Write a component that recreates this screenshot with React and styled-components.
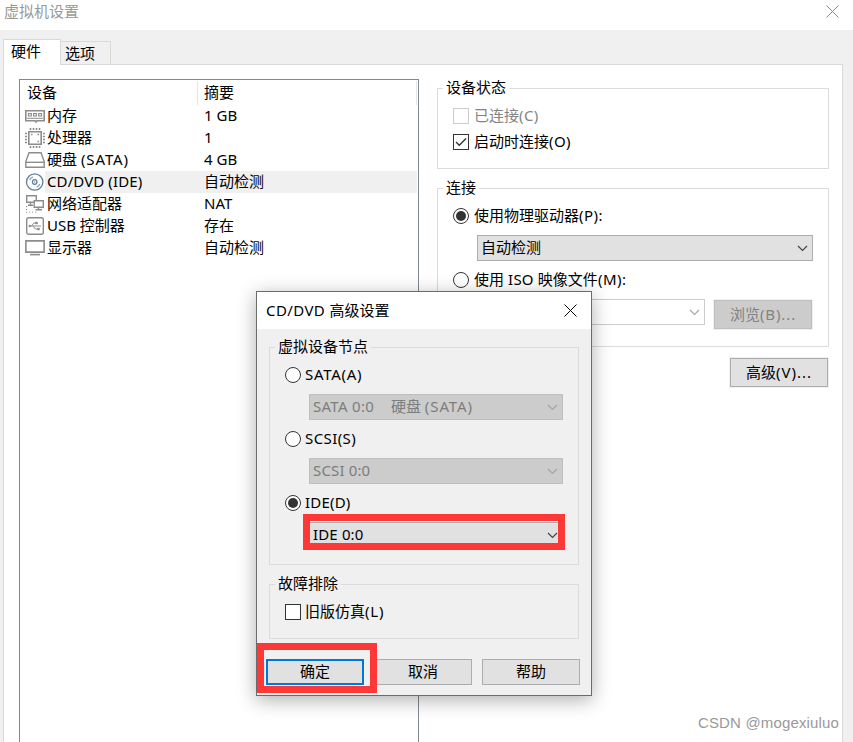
import React from 'react';
import { useState } from 'react';
import styled, { createGlobalStyle } from 'styled-components';

const GlobalStyle = createGlobalStyle`
    * {
        box-sizing: border-box;
    }
    body {
        margin: 0;
        overflow: hidden;
        font-family: "Noto Sans", "Noto Sans CJK SC", sans-serif;
        font-size: 15px;
        color: #000;
    }
`;

const Window = styled.div`
    position: relative;
    display: flex;
    flex-direction: column;
    width: 853px;
    height: 742px;
    overflow: hidden;
    background-color: #f0f0f0;
`;

const Latin = styled.span`
    letter-spacing: ${(props) => props.$spacing}px;
`;

const TitleBar = styled.div`
    display: flex;
    justify-content: space-between;
    height: 30px;
    padding: 0 14px 0 4px;
    line-height: 23px;
    color: #999;
    background-color: white;
`;

const CloseIcon = styled.svg`
    width: 13px;
    height: 13px;
    margin-top: ${(props) => props.$top}px;
    fill: none;
    stroke: ${(props) => props.$color};
    stroke-width: 1;
`;

const TabBar = styled.div`
    display: flex;
    align-items: flex-end;
    height: 34px;
    padding-left: 3px;
`;

const Tab = styled.div`
    position: relative;
    width: ${(props) => (props.$active ? 58 : 50)}px;
    height: ${(props) => (props.$active ? 26 : 23)}px;
    margin-bottom: ${(props) => (props.$active ? -1 : 0)}px;
    padding-left: ${(props) => (props.$active ? 7 : 4)}px;
    border: 1px solid #d9d9d9;
    border-bottom: none;
    border-left-width: ${(props) => (props.$active ? 1 : 0)}px;
    line-height: ${(props) => (props.$active ? 22 : 23)}px;
    background-color: ${(props) => (props.$active ? 'white' : '#f0f0f0')};
`;

const Panel = styled.div`
    display: flex;
    flex: 1;
    gap: 18px;
    margin: 0 10px 0 3px;
    padding: 14px 0 0 15px;
    border: 1px solid #d9d9d9;
    border-bottom: none;
    background-color: white;
`;

const DeviceList = styled.div`
    width: 400px;
    border: 1px solid #828790;
    border-bottom: none;
    padding-right: 1px;
`;

const ListHeader = styled.div`
    display: flex;
    height: 25px;
    padding-top: 1px;
    line-height: 22px;
`;

const HeaderCell = styled.div`
    width: ${(props) => props.$width}px;
    padding-left: ${(props) => props.$indent}px;
    border-right: 1px solid #e5e5e5;
`;

const DeviceRow = styled.div`
    display: flex;
    height: 22px;
    padding-left: 5px;
    line-height: 20px;
`;

const DeviceIcon = styled.svg`
    flex: none;
    width: 20px;
    height: 22px;
    fill: none;
    stroke: #8c8c8c;
    stroke-width: 1.6;
`;

const DeviceCells = styled.div`
    display: flex;
    flex: 1;
    padding-left: 2px;
    background-color: ${(props) => (props.$selected ? '#f0f0f0' : 'transparent')};
`;

const DeviceName = styled.span`
    width: 157px;
    white-space: nowrap;
`;

const Details = styled.div`
    display: flex;
    flex-direction: column;
    width: 392px;
    padding-top: 9px;
`;

const Group = styled.div`
    display: flex;
    flex-direction: column;
    align-items: flex-start;
    height: ${(props) => props.$height}px;
    margin-bottom: ${(props) => props.$gap}px;
    border: 1px solid #dcdcdc;
`;

const GroupTitle = styled.div`
    height: 20px;
    margin: -11px 0 0 5px;
    padding: 0 3px;
    line-height: 18px;
    background-color: ${(props) => props.$bg || 'white'};
`;

const Option = styled.div`
    display: flex;
    align-items: center;
    height: 16px;
    margin: ${(props) => props.$top || 10}px 0 0 15px;
    line-height: 16px;
    white-space: nowrap;
    color: ${(props) => (props.$disabled ? '#838383' : '#000')};
    cursor: default;
`;

const OptionText = styled.span`
    margin: -1px 0 1px ${(props) => props.$gap || 5}px;
`;

const CheckBox = styled.span`
    display: flex;
    width: 16px;
    height: 16px;
    border: 1px solid ${(props) => (props.$disabled ? '#ccc' : '#333')};
    background-color: white;
`;

const RadioCircle = styled.span`
    display: flex;
    align-items: center;
    justify-content: center;
    width: 16px;
    height: 16px;
    border: 1px solid #333;
    border-radius: 50%;
    background-color: white;

    &::after {
        content: '';
        width: 10px;
        height: 10px;
        border-radius: 50%;
        background-color: ${(props) => (props.$checked ? '#333' : 'transparent')};
    }
`;

const SelectBox = styled.div`
    display: flex;
    align-items: center;
    width: ${(props) => props.$width}px;
    height: 26px;
    margin: 11px 0 0 39px;
    padding: 0 4px 0 3px;
    border: 1px solid ${(props) => (props.$disabled ? '#bfbfbf' : '#adadad')};
    color: ${(props) => (props.$disabled ? '#7d7d7d' : '#000')};
    background-color: ${(props) => (props.$disabled ? '#ccc' : '#e1e1e1')};
    white-space: pre;
`;

const SelectText = styled.span`
    margin: -1px 0 1px 0;
    line-height: 20px;
`;

const EmptySelect = styled(SelectBox)`
    margin: 0;
    border-color: #ccc;
    background-color: white;
`;

const Arrow = styled.svg`
    width: 11px;
    height: 7px;
    margin-left: auto;
    fill: none;
    stroke: ${(props) => (props.$disabled ? '#a6a6a6' : '#444')};
    stroke-width: 1.2;
`;

const FileRow = styled.div`
    display: flex;
    gap: 9px;
    margin: 11px 0 0 39px;
`;

const Button = styled.button`
    width: 98px;
    height: ${(props) => props.$height || 26}px;
    padding: 0 0 2px 0;
    border: ${(props) => (props.$primary ? '2px solid #0078d7' : '1px solid #adadad')};
    font: inherit;
    line-height: 20px;
    color: black;
    background-color: #e1e1e1;

    &:disabled {
        border-color: #bfbfbf;
        color: #838383;
        background-color: #ccc;
    }
`;

const BrowseButton = styled(Button)`
    margin-top: 1px;
    box-shadow: 0 0 0 1px #f0f0f0;
`;

const AdvancedButton = styled(Button)`
    align-self: flex-end;
    margin-right: 1px;
    box-shadow: 0 0 0 1px #f0f0f0;
`;

const Dialog = styled.div`
    position: absolute;
    left: 256px;
    top: 291px;
    width: 336px;
    height: 405px;
    border: 1px solid #6b6b6b;
    background-color: #f0f0f0;
    box-shadow: 0 4px 18px rgba(0, 0, 0, 0.32);
`;

const DialogTitle = styled.div`
    display: flex;
    justify-content: space-between;
    height: 37px;
    padding: 0 14px 0 9px;
    line-height: 36px;
    background-color: white;
`;

const DialogBody = styled.div`
    padding: 18px 12px 0 12px;
`;

const DialogButtons = styled.div`
    display: flex;
    gap: 10px;
    margin: 20px -3px 0 -3px;
`;

const Highlight = styled.div`
    position: absolute;
    left: ${(props) => props.$left}px;
    top: ${(props) => props.$top}px;
    width: ${(props) => props.$width}px;
    height: ${(props) => props.$height}px;
    border: 7px solid #fd3836;
    pointer-events: none;
`;

const Watermark = styled.div`
    position: absolute;
    right: 14px;
    bottom: 9px;
    font-family: "Liberation Sans", sans-serif;
    font-size: 15px;
    letter-spacing: 0.15px;
    line-height: 20px;
    color: #999;
`;

const icons = {
    memory: (
        <>
            <path d="M0.8 5.8H19.2V15.8H12L11 17L10 15.8H0.8Z" />
            <path d="M3.5 8.5H6.3V11H3.5ZM8.6 8.5H11.4V11H8.6ZM13.7 8.5H16.5V11H13.7Z" strokeWidth="1.2" />
            <path d="M2 13.3H18" strokeWidth="1" />
        </>
    ),
    cpu: (
        <>
            <path d="M3.8 4.8H16.2V17.2H3.8Z" />
            <path d="M5.5 1V3M8.5 1V3M11.5 1V3M14.5 1V3M5.5 19V21M8.5 19V21M11.5 19V21M14.5 19V21" />
            <path d="M0 6.5H2M0 9.5H2M0 12.5H2M0 15.5H2M18 6.5H20M18 9.5H20M18 12.5H20M18 15.5H20" />
            <path d="M6 7.5H7.5M12.5 7.5H14M12.5 14.5H14" strokeWidth="1.5" />
        </>
    ),
    disk: (
        <>
            <path d="M4 3.7H16L19.2 12.5V18.3H0.8V12.5Z" strokeWidth="1.4" />
            <path d="M1 13.3H19" strokeWidth="1.4" />
        </>
    ),
    cd: (
        <>
            <circle cx="9.7" cy="11" r="8.2" stroke="#5f7f9c" strokeWidth="1.3" />
            <circle cx="9.7" cy="11" r="2.3" stroke="#5f7f9c" strokeWidth="1.2" />
            <circle cx="9.7" cy="11" r="0.7" fill="#5f7f9c" stroke="none" />
            <path d="M4.6 9A5.6 5.6 0 0 1 7.8 5.8M14.8 13A5.6 5.6 0 0 1 11.6 16.2" stroke="#7fa3c4" strokeWidth="1.3" />
        </>
    ),
    network: (
        <>
            <path d="M1.7 2.7H11.3V9.3H1.7ZM5.5 9.5V12M3 12.2H8" strokeWidth="1.4" />
            <path d="M9.2 7.7H18.3V14.3H9.2Z" fill="white" strokeWidth="1.4" />
            <path d="M13.5 14.5V16.5M10.5 16.7H17" strokeWidth="1.4" />
            <path d="M1.5 13V19.3H13" strokeDasharray="1 2" strokeWidth="1.1" />
        </>
    ),
    usb: (
        <>
            <rect x="1.7" y="2.7" width="16.6" height="16.6" rx="2" strokeWidth="1.4" />
            <path d="M4.5 11H16M6.5 11L9 8H11M8 11L10.5 14H13" strokeWidth="1" />
            <path d="M10.5 7H12.5V9H10.5ZM12.5 13H14.5V15H12.5Z" fill="#8c8c8c" strokeWidth="0.4" />
            <circle cx="4.8" cy="11" r="1.2" fill="#8c8c8c" stroke="none" />
        </>
    ),
    display: (
        <>
            <path d="M0.9 3.9H19.1V15.1H0.9Z" />
            <path d="M5 17.6H15" />
        </>
    ),
};

const devices = [
    { icon: 'memory', name: '内存', summary: '1 GB' },
    { icon: 'cpu', name: '处理器', summary: '1' },
    { icon: 'disk', name: <>硬盘 <Latin $spacing={0.9}>(SATA)</Latin></>, summary: '4 GB' },
    { icon: 'cd', name: <Latin $spacing={0.1}>CD/DVD (IDE)</Latin>, summary: '自动检测' },
    { icon: 'network', name: '网络适配器', summary: 'NAT' },
    { icon: 'usb', name: 'USB 控制器', summary: '存在' },
    { icon: 'display', name: '显示器', summary: '自动检测' },
];

const Close = (props) => (
    <CloseIcon viewBox="0 0 13 13" $top={props.top} $color={props.color}>
        <path d="M0.5 0.5L12.5 12.5M12.5 0.5L0.5 12.5" />
    </CloseIcon>
);

const Check = (props) => (
    <Option $top={props.top} $disabled={props.disabled} onClick={props.onClick}>
        <CheckBox $disabled={props.disabled}>
            {props.checked && (
                <svg width="14" height="14" viewBox="0 0 14 14" fill="none" stroke="#333" strokeWidth="1.4">
                    <path d="M2 7L5.3 10.3L12 3.6" />
                </svg>
            )}
        </CheckBox>
        <OptionText $gap={props.gap}>{props.label}</OptionText>
    </Option>
);

const Radio = (props) => (
    <Option $top={props.top} onClick={props.onClick}>
        <RadioCircle $checked={props.checked} />
        <OptionText $gap={props.gap}>{props.label}</OptionText>
    </Option>
);

const DropArrow = (props) => (
    <Arrow viewBox="0 0 11 7" $disabled={props.disabled}>
        <path d="M1 1L5.5 5.5L10 1" />
    </Arrow>
);

const Select = (props) => (
    <SelectBox $width={props.width} $disabled={props.disabled}>
        <SelectText>{props.value}</SelectText>
        <DropArrow disabled={props.disabled} />
    </SelectBox>
);

const AdvancedDialog = () => {
    const [node, setNode] = useState('IDE');
    const [legacy, setLegacy] = useState(false);

    return (
        <Dialog>
            <DialogTitle>
                <span><Latin $spacing={0.4}>CD/DVD </Latin>高级设置</span>
                <Close top={12} color="#000" />
            </DialogTitle>
            <DialogBody>
                <Group $height={218} $gap={19}>
                    <GroupTitle $bg="#f0f0f0">虚拟设备节点</GroupTitle>
                    <Radio
                        label={<Latin $spacing={0.7}>SATA(A)</Latin>}
                        gap={4}
                        checked={node === 'SATA'}
                        onClick={() => setNode('SATA')}
                    />
                    <Select
                        width={254}
                        value={<><Latin $spacing={0.3}>SATA 0:0    </Latin>硬盘 <Latin $spacing={0.9}>(SATA)</Latin></>}
                        disabled={node !== 'SATA'}
                    />
                    <Radio
                        label={<Latin $spacing={0.4}>SCSI(S)</Latin>}
                        top={11}
                        gap={4}
                        checked={node === 'SCSI'}
                        onClick={() => setNode('SCSI')}
                    />
                    <Select width={254} value={<Latin $spacing={0.15}>SCSI 0:0</Latin>} disabled={node !== 'SCSI'} />
                    <Radio
                        label={<Latin $spacing={0.2}>IDE(D)</Latin>}
                        top={11}
                        gap={4}
                        checked={node === 'IDE'}
                        onClick={() => setNode('IDE')}
                    />
                    <Select width={254} value={<Latin $spacing={0.15}>IDE 0:0</Latin>} disabled={node !== 'IDE'} />
                </Group>
                <Group $height={55} $gap={0}>
                    <GroupTitle $bg="#f0f0f0">故障排除</GroupTitle>
                    <Check
                        label={<>旧版仿真<Latin $spacing={0.8}>(L)</Latin></>}
                        gap={4}
                        checked={legacy}
                        onClick={() => setLegacy(!legacy)}
                    />
                </Group>
                <DialogButtons>
                    <Button $primary>确定</Button>
                    <Button>取消</Button>
                    <Button>帮助</Button>
                </DialogButtons>
            </DialogBody>
        </Dialog>
    );
};

const App = () => {
    const [selected, setSelected] = useState(3);
    const [physical, setPhysical] = useState(true);
    const [autoConnect, setAutoConnect] = useState(true);

    return (
        <Window>
            <GlobalStyle />
            <TitleBar>
                <span>虚拟机设置</span>
                <Close top={5} color="#888" />
            </TitleBar>
            <TabBar>
                <Tab $active>硬件</Tab>
                <Tab>选项</Tab>
            </TabBar>
            <Panel>
                <DeviceList>
                    <ListHeader>
                        <HeaderCell $width={178} $indent={7}>设备</HeaderCell>
                        <HeaderCell $width={219} $indent={6}>摘要</HeaderCell>
                    </ListHeader>
                    {devices.map((device, index) => (
                        <DeviceRow key={device.icon} onClick={() => setSelected(index)}>
                            <DeviceIcon viewBox="0 0 20 22">{icons[device.icon]}</DeviceIcon>
                            <DeviceCells $selected={index === selected}>
                                <DeviceName>{device.name}</DeviceName>
                                <span>{device.summary}</span>
                            </DeviceCells>
                        </DeviceRow>
                    ))}
                </DeviceList>
                <Details>
                    <Group $height={81} $gap={19}>
                        <GroupTitle>设备状态</GroupTitle>
                        <Check label={<>已连接<Latin $spacing={0.4}>(C)</Latin></>} disabled />
                        <Check
                            label={<>启动时连接<Latin $spacing={0.4}>(O)</Latin></>}
                            checked={autoConnect}
                            onClick={() => setAutoConnect(!autoConnect)}
                        />
                    </Group>
                    <Group $height={159} $gap={11}>
                        <GroupTitle>连接</GroupTitle>
                        <Radio
                            label={<>使用物理驱动器<Latin $spacing={0.5}>(P):</Latin></>}
                            checked={physical}
                            onClick={() => setPhysical(true)}
                        />
                        <Select width={336} value="自动检测" />
                        <Radio
                            label={<>使用<Latin $spacing={0.2}> ISO </Latin>映像文件<Latin $spacing={0.5}>(M):</Latin></>}
                            top={11}
                            checked={!physical}
                            onClick={() => setPhysical(false)}
                        />
                        <FileRow>
                            <EmptySelect $width={228} $disabled>
                                <DropArrow disabled />
                            </EmptySelect>
                            <BrowseButton $height={29} disabled={physical}>
                                浏览<Latin $spacing={0.9}>(B)...</Latin>
                            </BrowseButton>
                        </FileRow>
                    </Group>
                    <AdvancedButton $height={29}>
                        高级<Latin $spacing={1}>(V)...</Latin>
                    </AdvancedButton>
                </Details>
            </Panel>
            <AdvancedDialog />
            <Highlight $left={303} $top={514} $width={262} $height={36} />
            <Highlight $left={257} $top={643} $width={120} $height={50} />
            <Watermark>CSDN @mogexiuluo</Watermark>
        </Window>
    );
};

export default App;
